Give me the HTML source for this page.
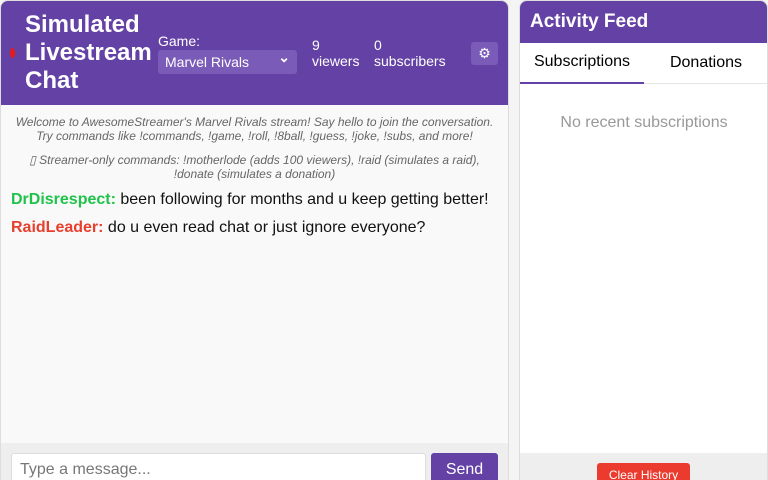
<!DOCTYPE html>
<html><head><style>
*{box-sizing:border-box;margin:0;padding:0}
html,body{width:768px;height:480px;overflow:hidden}
body{background:#f4f4f4;font-family:"Liberation Sans",sans-serif;position:relative}
.left{position:absolute;left:0;top:0;width:509px;height:480px;border:1px solid #ddd;border-bottom:none;border-radius:8px 8px 0 0;background:#f9f9f9;overflow:hidden}
.hdr{position:absolute;left:0;top:0;width:509px;height:104px;background:#6441a5;color:#fff}
.dot{position:absolute;left:9px;top:47px;width:5px;height:10px;background:#e91916;border-radius:50%}
.title{position:absolute;left:24px;top:10px;font-size:24px;font-weight:bold;line-height:28px}
.game{position:absolute;left:157px;top:32px;font-size:14px}
.sel{position:absolute;left:157px;top:49px;width:139px;height:24px;background:#7b5bb8;border-radius:3px;font-size:14px;padding:4px 7px}
.sel:after{content:"⌄";position:absolute;right:7px;top:-1px;font-size:14px;font-weight:bold}
.stat{position:absolute;top:36px;font-size:14px;line-height:16px}
.gear{position:absolute;left:470px;top:41px;width:27px;height:23px;background:#7b5bb8;border-radius:3px;text-align:center;font-size:14px;line-height:23px}
.sys{position:absolute;left:0;width:507px;text-align:center;font-style:italic;font-size:12px;color:#666;line-height:14px}
.msg{position:absolute;left:10px;font-size:16px;color:#111}
.inp{position:absolute;left:0;top:442px;width:509px;height:50px;background:#eee}
.box{position:absolute;left:10px;top:10px;width:415px;height:32px;background:#fff;border:1px solid #ddd;border-radius:3px;font-size:16px;color:#777;padding:7px 8px}
.send{position:absolute;left:430px;top:10px;width:67px;height:32px;background:#6441a5;color:#fff;border-radius:3px;font-size:16px;text-align:center;line-height:34px}
.right{position:absolute;left:519px;top:0;width:249px;height:480px;border:1px solid #ddd;border-bottom:none;border-radius:8px 8px 0 0;background:#fff;overflow:hidden}
.rh{height:42px;background:#6441a5;color:#fff;font-weight:bold;font-size:19px;padding:10px 10px}
.tabs{position:absolute;top:42px;left:0;width:248px;height:41px;border-bottom:1px solid #e5e5e5;font-size:16px}
.t1{position:absolute;left:0;width:124px;height:41px;border-bottom:2px solid #6441a5;text-align:center;padding-top:10px}
.t2{position:absolute;left:124px;width:124px;text-align:center;padding-top:11px}
.none{position:absolute;top:113px;width:248px;text-align:center;color:#999;font-size:16px}
.foot{position:absolute;top:452px;left:0;width:248px;height:40px;background:#eee}
.clr{position:absolute;left:77px;top:10px;width:93px;height:22px;background:#eb3b2f;color:#fff;border-radius:3px;font-size:12px;text-align:center;line-height:24px}
</style></head><body>
<div class="left">
<div class="hdr"><div class="dot"></div><div class="title">Simulated<br>Livestream<br>Chat</div>
<div class="game">Game:</div><div class="sel">Marvel Rivals</div>
<div class="stat" style="left:311px">9<br>viewers</div><div class="stat" style="left:373px">0<br>subscribers</div>
<div class="gear">⚙</div></div>
<div class="sys" style="top:114px">Welcome to AwesomeStreamer's Marvel Rivals stream! Say hello to join the conversation.<br>Try commands like !commands, !game, !roll, !8ball, !guess, !joke, !subs, and more!</div>
<div class="sys" style="top:152px">▯ Streamer-only commands: !motherlode (adds 100 viewers), !raid (simulates a raid),<br>!donate (simulates a donation)</div>
<div class="msg" style="top:190px"><b style="color:#1fc24b">DrDisrespect:</b> been following for months and u keep getting better!</div>
<div class="msg" style="top:218px"><b style="color:#e8402f">RaidLeader:</b> do u even read chat or just ignore everyone?</div>
<div class="inp"><div class="box">Type a message...</div><div class="send">Send</div></div>
</div>
<div class="right"><div class="rh">Activity Feed</div>
<div class="tabs"><div class="t1">Subscriptions</div><div class="t2">Donations</div></div>
<div class="none">No recent subscriptions</div>
<div class="foot"><div class="clr">Clear History</div></div></div>
</body></html>
